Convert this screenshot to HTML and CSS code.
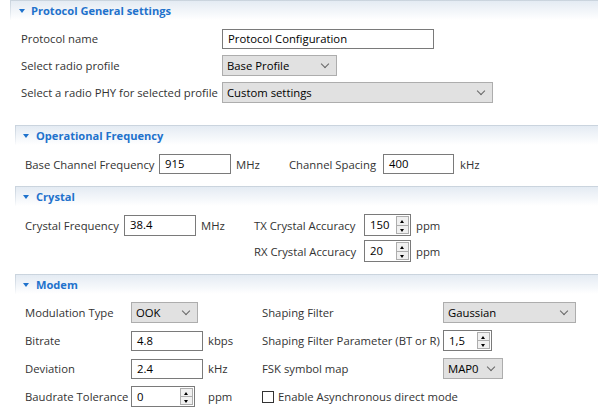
FILE: index.html
```html
<!DOCTYPE html>
<html>
<head>
<meta charset="utf-8">
<link rel="stylesheet" href="styles.css">
</head>
<body>
<div class="sec s1">
  <div class="hdr"><span class="tw"></span>Protocol General settings</div>
  <div class="body g1">
    <div class="lbl">Protocol name</div>
    <div class="ctl"><div class="txt w211">Protocol Configuration</div></div>
    <div class="lbl">Select radio profile</div>
    <div class="ctl"><div class="sel w115">Base Profile<span class="chev"></span></div></div>
    <div class="lbl">Select a radio PHY for selected profile</div>
    <div class="ctl"><div class="sel w271">Custom settings<span class="chev"></span></div></div>
  </div>
</div>

<div class="sec s2">
  <div class="hdr"><span class="tw"></span>Operational Frequency</div>
  <div class="body g2">
    <div class="lbl">Base Channel Frequency</div>
    <div class="txt">915</div>
    <div class="unit">MHz</div>
    <div class="lbl">Channel Spacing</div>
    <div class="txt">400</div>
    <div class="unit u6">kHz</div>
  </div>
</div>

<div class="sec s3">
  <div class="hdr"><span class="tw"></span>Crystal</div>
  <div class="body g3">
    <div class="lbl">Crystal Frequency</div>
    <div class="txt">38.4</div>
    <div class="unit">MHz</div>
    <div class="lbl">TX Crystal Accuracy</div>
    <div class="spin">150<span class="btns"><span class="up"></span><span class="dn"></span></span></div>
    <div class="unit">ppm</div>
    <div></div><div></div><div></div>
    <div class="lbl">RX Crystal Accuracy</div>
    <div class="spin">20<span class="btns"><span class="up"></span><span class="dn"></span></span></div>
    <div class="unit">ppm</div>
  </div>
</div>

<div class="sec s4">
  <div class="hdr"><span class="tw"></span>Modem</div>
  <div class="body g4">
    <div class="lbl">Modulation Type</div>
    <div><div class="sel w67">OOK<span class="chev"></span></div></div>
    <div class="unit"></div>
    <div class="lbl">Shaping Filter</div>
    <div><div class="sel w133">Gaussian<span class="chev"></span></div></div>

    <div class="lbl">Bitrate</div>
    <div class="txt">4.8</div>
    <div class="unit">kbps</div>
    <div class="lbl">Shaping Filter Parameter (BT or R)</div>
    <div><div class="spin w49">1,5<span class="btns"><span class="up"></span><span class="dn"></span></span></div></div>

    <div class="lbl">Deviation</div>
    <div class="txt">2.4</div>
    <div class="unit">kHz</div>
    <div class="lbl">FSK symbol map</div>
    <div><div class="sel w60">MAP0<span class="chev"></span></div></div>

    <div class="lbl">Baudrate Tolerance</div>
    <div><div class="spin w64">0<span class="btns"><span class="up"></span><span class="dn"></span></span></div></div>
    <div class="unit">ppm</div>
    <div class="chk"><span class="box"></span>Enable Asynchronous direct mode</div>
  </div>
</div>
</body>
</html>
```

FILE: styles.css
```css
html, body {
  margin: 0;
  padding: 0;
  background: #ffffff;
}
body {
  width: 598px;
  height: 413px;
  overflow: hidden;
  font-family: "Open Sans", "Noto Sans", sans-serif;
  font-size: 11.3px;
  color: #333333;
}
.sec {
  margin-right: -4px;
}
.s1 { margin-left: 10px; }
.s2, .s3, .s4 { margin-left: 15px; }

.hdr {
  box-sizing: border-box;
  height: 20px;
  line-height: 19px;
  border-style: solid;
  border-width: 1px 0 0 1px;
  border-image: linear-gradient(#c9d3dd, rgba(255,255,255,0)) 1;
  background: linear-gradient(#e4ebf3, #ffffff);
  color: #1f72cc;
  font-weight: bold;
  font-size: 11.1px;
  padding-left: 7px;
  display: flex;
  align-items: center;
  white-space: nowrap;
}
.tw {
  width: 0;
  height: 0;
  border-left: 3.5px solid transparent;
  border-right: 3.5px solid transparent;
  border-top: 4px solid #1f72cc;
  margin-right: 7px;
  margin-top: 1px;
}
.s1 .hdr { padding-left: 8px; }
.s1 .tw { margin-right: 6px; }

.body {
  display: grid;
  align-items: center;
  white-space: nowrap;
}
.s1 .body { padding: 8px 0 22px 11px; }
.s2 .body { padding: 9px 0 12px 10px; }
.s3 .body { padding: 8px 0 12px 10px; }
.s4 .body { padding: 8px 0 0 10px; }

.g1 {
  grid-template-columns: 201px auto;
  row-gap: 6px;
  grid-auto-rows: 21px;
}
.g2 {
  grid-template-columns: 134px 72px 58px 94px 71px auto;
  grid-auto-rows: 20px;
}
.g3 {
  grid-template-columns: 99px 72px 58px 110px 47px auto;
  grid-auto-rows: 22px;
  row-gap: 4px;
}
.g4 {
  grid-template-columns: 106px 72px 59px 181px auto;
  grid-auto-rows: 21px;
  row-gap: 7px;
}

.lbl { color: #333333; }
.unit { padding-left: 5px; }
.u6 { padding-left: 6px; }

.txt, .sel, .spin {
  box-sizing: border-box;
  height: 21px;
  line-height: 19px;
  color: #000000;
  position: relative;
  overflow: hidden;
}
.txt {
  border: 1px solid #7a7a7a;
  background: #ffffff;
  padding-left: 5px;
  height: 20px;
  line-height: 18px;
}
.g3 .txt { height: 21px; }
.sel {
  border: 1px solid #adadad;
  background: #e1e1e1;
  padding-left: 4px;
}
.chev {
  position: absolute;
  right: 8px;
  top: 5px;
  width: 5px;
  height: 5px;
  border-right: 1px solid #666666;
  border-bottom: 1px solid #666666;
  transform: rotate(45deg);
}
.w211 { width: 212px; }
.w115 { width: 115px; }
.w271 { width: 271px; }
.w67 { width: 67px; }
.w133 { width: 133px; }
.w60 { width: 60px; }
.w49 { width: 49px; }
.w64 { width: 64px; }

.spin {
  border: 1px solid #7a7a7a;
  background: #ffffff;
  padding-left: 5px;
  height: 22px;
  line-height: 20px;
}
.g4 .spin { height: 21px; line-height: 19px; }
.btns {
  position: absolute;
  right: 1px;
  top: 1px;
  bottom: 1px;
  width: 13px;
  display: flex;
  flex-direction: column;
  border: 1px solid #adadad;
  box-sizing: border-box;
  background: #f0f0f0;
}
.btns span {
  flex: 1;
  position: relative;
}
.btns .up { border-bottom: 1px solid #adadad; }
.btns .up::after, .btns .dn::after {
  content: "";
  position: absolute;
  left: 3px;
  width: 0;
  height: 0;
  border-left: 2.5px solid transparent;
  border-right: 2.5px solid transparent;
}
.btns .up::after {
  top: 3px;
  border-bottom: 3px solid #000000;
}
.btns .dn::after {
  top: 3px;
  border-top: 3px solid #000000;
}

.chk {
  grid-column: 4 / span 2;
  display: flex;
  align-items: center;
  color: #333333;
}
.chk .box {
  box-sizing: border-box;
  width: 12px;
  height: 12px;
  border: 1px solid #333333;
  background: #ffffff;
  margin-right: 4px;
}
```
